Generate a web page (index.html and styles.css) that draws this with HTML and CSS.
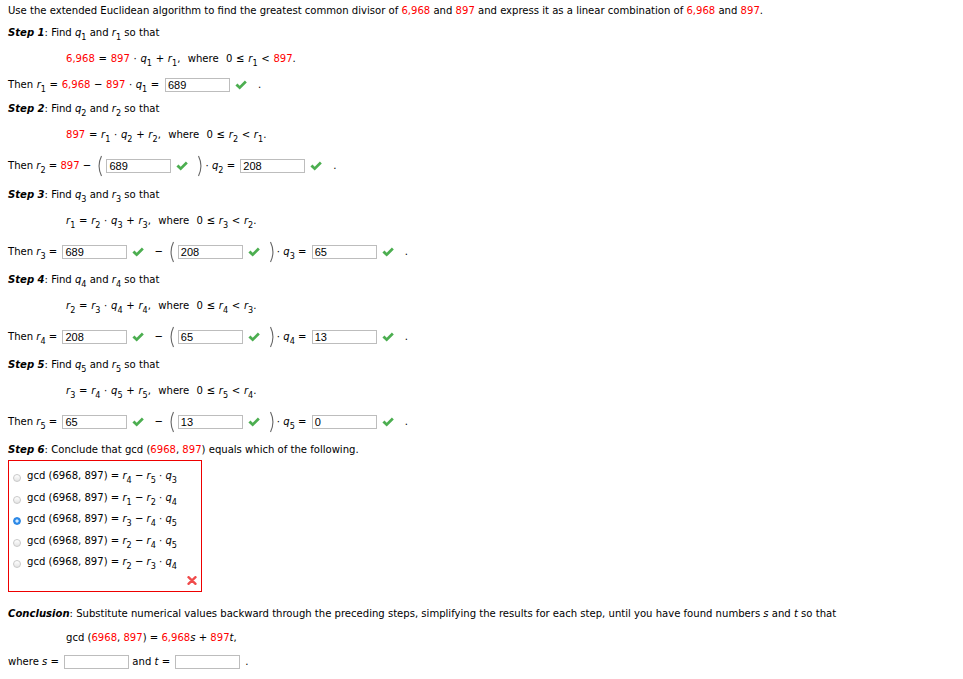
FILE: index.html
```html
<!DOCTYPE html>
<html>
<head>
<meta charset="utf-8">
<link rel="stylesheet" href="styles.css">
</head>
<body>
<svg width="0" height="0" class="defs">
  <defs>
    <symbol id="chk" viewBox="0 0 12 10"><path d="M0.4 5.6 L2.5 3.6 L4.7 5.8 L9.9 0.6 L11.8 2.5 L4.7 9.6 Z" fill="#4cae50"/></symbol>
    <symbol id="lp" viewBox="0 0 7 22"><path d="M5.5 1 Q0.6 11 5.5 21" fill="none" stroke="#666" stroke-width="1.1"/></symbol>
    <symbol id="rp" viewBox="0 0 7 22"><path d="M1.5 1 Q6.4 11 1.5 21" fill="none" stroke="#666" stroke-width="1.1"/></symbol>
  </defs>
</svg>

<div class="row intro">Use the extended Euclidean algorithm to find the greatest common divisor of <span class="n">6,968</span> and <span class="n">897</span> and express it as a linear combination of <span class="n">6,968</span> and <span class="n">897</span>.</div>

<div class="row step s1"><b><i>Step 1</i></b>: Find <i>q</i><sub>1</sub> and <i>r</i><sub>1</sub> so that</div>
<div class="row eq"><span class="n">6,968</span> = <span class="n">897</span> · <i>q</i><sub>1</sub> + <i>r</i><sub>1</sub>,&nbsp; where&nbsp; 0 ≤ <i>r</i><sub>1</sub> &lt; <span class="n">897</span>.</div>
<div class="row then plain">Then <i>r</i><sub>1</sub> = <span class="n">6,968</span> − <span class="n">897</span> · <i>q</i><sub>1</sub> = <span class="box">689</span><svg class="chk"><use href="#chk"/></svg><span class="dot">.</span></div>

<div class="row step s2"><b><i>Step 2</i></b>: Find <i>q</i><sub>2</sub> and <i>r</i><sub>2</sub> so that</div>
<div class="row eq"><span class="n">897</span> = <i>r</i><sub>1</sub> · <i>q</i><sub>2</sub> + <i>r</i><sub>2</sub>,&nbsp; where&nbsp; 0 ≤ <i>r</i><sub>2</sub> &lt; <i>r</i><sub>1</sub>.</div>
<div class="row then">Then <i>r</i><sub>2</sub> = <span class="n">897</span> − <svg class="par l"><use href="#lp"/></svg><span class="box">689</span><svg class="chk"><use href="#chk"/></svg><svg class="par r"><use href="#rp"/></svg>· <i>q</i><sub>2</sub> = <span class="box">208</span><svg class="chk"><use href="#chk"/></svg><span class="dot">.</span></div>

<div class="row step s3"><b><i>Step 3</i></b>: Find <i>q</i><sub>3</sub> and <i>r</i><sub>3</sub> so that</div>
<div class="row eq"><i>r</i><sub>1</sub> = <i>r</i><sub>2</sub> · <i>q</i><sub>3</sub> + <i>r</i><sub>3</sub>,&nbsp; where&nbsp; 0 ≤ <i>r</i><sub>3</sub> &lt; <i>r</i><sub>2</sub>.</div>
<div class="row then">Then <i>r</i><sub>3</sub> = <span class="box">689</span><svg class="chk"><use href="#chk"/></svg><span class="minus">−</span><svg class="par l"><use href="#lp"/></svg><span class="box">208</span><svg class="chk"><use href="#chk"/></svg><svg class="par r"><use href="#rp"/></svg>· <i>q</i><sub>3</sub> = <span class="box">65</span><svg class="chk"><use href="#chk"/></svg><span class="dot">.</span></div>

<div class="row step"><b><i>Step 4</i></b>: Find <i>q</i><sub>4</sub> and <i>r</i><sub>4</sub> so that</div>
<div class="row eq"><i>r</i><sub>2</sub> = <i>r</i><sub>3</sub> · <i>q</i><sub>4</sub> + <i>r</i><sub>4</sub>,&nbsp; where&nbsp; 0 ≤ <i>r</i><sub>4</sub> &lt; <i>r</i><sub>3</sub>.</div>
<div class="row then">Then <i>r</i><sub>4</sub> = <span class="box">208</span><svg class="chk"><use href="#chk"/></svg><span class="minus">−</span><svg class="par l"><use href="#lp"/></svg><span class="box">65</span><svg class="chk"><use href="#chk"/></svg><svg class="par r"><use href="#rp"/></svg>· <i>q</i><sub>4</sub> = <span class="box">13</span><svg class="chk"><use href="#chk"/></svg><span class="dot">.</span></div>

<div class="row step"><b><i>Step 5</i></b>: Find <i>q</i><sub>5</sub> and <i>r</i><sub>5</sub> so that</div>
<div class="row eq"><i>r</i><sub>3</sub> = <i>r</i><sub>4</sub> · <i>q</i><sub>5</sub> + <i>r</i><sub>5</sub>,&nbsp; where&nbsp; 0 ≤ <i>r</i><sub>5</sub> &lt; <i>r</i><sub>4</sub>.</div>
<div class="row then">Then <i>r</i><sub>5</sub> = <span class="box">65</span><svg class="chk"><use href="#chk"/></svg><span class="minus">−</span><svg class="par l"><use href="#lp"/></svg><span class="box">13</span><svg class="chk"><use href="#chk"/></svg><svg class="par r"><use href="#rp"/></svg>· <i>q</i><sub>5</sub> = <span class="box">0</span><svg class="chk"><use href="#chk"/></svg><span class="dot">.</span></div>

<div class="row step"><b><i>Step 6</i></b>: Conclude that gcd (<span class="n">6968</span>, <span class="n">897</span>) equals which of the following.</div>

<div class="choices">
  <div class="opt"><span class="radio"></span>gcd (6968, 897) = <i>r</i><sub>4</sub> − <i>r</i><sub>5</sub> · <i>q</i><sub>3</sub></div>
  <div class="opt"><span class="radio"></span>gcd (6968, 897) = <i>r</i><sub>1</sub> − <i>r</i><sub>2</sub> · <i>q</i><sub>4</sub></div>
  <div class="opt"><span class="radio on"></span>gcd (6968, 897) = <i>r</i><sub>3</sub> − <i>r</i><sub>4</sub> · <i>q</i><sub>5</sub></div>
  <div class="opt"><span class="radio"></span>gcd (6968, 897) = <i>r</i><sub>2</sub> − <i>r</i><sub>4</sub> · <i>q</i><sub>5</sub></div>
  <div class="opt"><span class="radio"></span>gcd (6968, 897) = <i>r</i><sub>2</sub> − <i>r</i><sub>3</sub> · <i>q</i><sub>4</sub></div>
  <div class="xrow"><svg class="x" viewBox="0 0 10 9"><path d="M1.5 1.2 L8.5 7.8 M8.5 1.2 L1.5 7.8" stroke="#f04b4b" stroke-width="2.4" stroke-linecap="round"/></svg></div>
</div>

<div class="row concl"><b><i>Conclusion</i></b>: Substitute numerical values backward through the preceding steps, simplifying the results for each step, until you have found numbers <i>s</i> and <i>t</i> so that</div>
<div class="row eq2 indent">gcd (<span class="n">6968</span>, <span class="n">897</span>) = <span class="n">6,968</span><i>s</i> + <span class="n">897</span><i>t</i>,</div>
<div class="row eq2">where <i>s</i> = <span class="box"></span> and <i>t</i> = <span class="box"></span><span class="dot2">.</span></div>
</body>
</html>
```

FILE: styles.css
```css
html, body { background: #fff; }
body {
  margin: 0;
  padding: 1px 8px 0;
  font-family: "DejaVu Sans Condensed", "DejaVu Sans", Verdana, sans-serif;
  font-size: 11.2px;
  color: #000;
}
.defs { position: absolute; width: 0; height: 0; }
.row {
  height: 20px;
  line-height: 20px;
  white-space: nowrap;
}
.n { color: #f00; }
i { font-style: italic; }
sub {
  font-size: 9px;
  line-height: 0;
  vertical-align: -4px;
}
.step { margin-top: 9px; }
.s1 { margin-top: 2px; }
.s2 { margin-top: 4px; }
.s3 { margin-top: 10px; }
.eq { margin-top: 6px; padding-left: 58px; word-spacing: 0.5px; }
.then { margin-top: 10px; }
.then.plain { margin-top: 6px; word-spacing: 0.4px; }
.box {
  display: inline-block;
  vertical-align: middle;
  box-sizing: border-box;
  width: 65px;
  height: 14px;
  margin-left: 2px;
  border: 1px solid #bdbdbd;
  padding-left: 2px;
  font-family: "Liberation Sans", Arial, sans-serif;
  font-size: 11px;
  line-height: 12px;
  color: #000;
  word-spacing: 0;
}
.chk {
  display: inline-block;
  vertical-align: middle;
  width: 12px;
  height: 10px;
  margin-left: 5px;
  margin-right: 10px;
}
.dot { margin-left: 1px; }
.par {
  display: inline-block;
  vertical-align: middle;
  width: 7px;
  height: 22px;
}
.par.l { margin-left: 2px; margin-right: 1px; }
.par.r { margin-left: -1px; margin-right: 1px; }
.minus { margin-right: 3px; }
.choices {
  margin-top: 0;
  width: 192px;
  height: 126px;
  border: 1px solid #e00;
  padding-top: 4px;
}
.opt {
  height: 21.5px;
  line-height: 21.5px;
  white-space: nowrap;
}
.radio {
  display: inline-block;
  vertical-align: middle;
  box-sizing: border-box;
  width: 8px;
  height: 8px;
  border-radius: 50%;
  border: 1px solid #c9c9c9;
  background: linear-gradient(#ffffff, #e4e4e4);
  margin-left: 4px;
  margin-right: 6px;
  position: relative;
  top: 2px;
}
.radio.on {
  border-color: #2a86e2;
  background: radial-gradient(circle, #d6ebff 0 1.3px, #2f8ceb 1.9px);
}
.xrow {
  height: 14px;
  text-align: right;
  padding-right: 4px;
}
.x { width: 10px; height: 9px; margin-top: 3px; }
.concl { margin-top: 12px; }
.eq2 { margin-top: 4px; }
.indent { padding-left: 58px; }
.dot2 { margin-left: 5px; }
```
